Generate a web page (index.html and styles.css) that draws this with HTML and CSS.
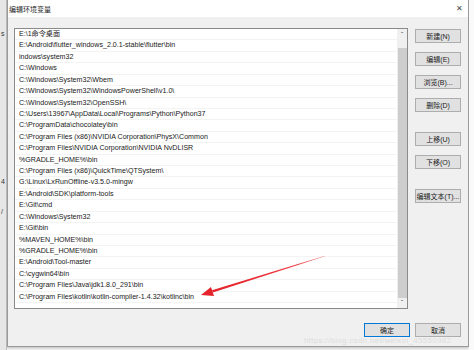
FILE: index.html
```html
<!DOCTYPE html>
<html lang="zh-CN">
<head>
    <meta charset="UTF-8">
    <title>编辑环境变量</title>
    <link rel="stylesheet" href="styles.css">
</head>
<body>
    <div class="desk">
        <div class="behind"><span class="mark m1">s</span><span class="mark m2">4</span><span class="mark m3">/</span></div>
        <div class="dialog">
            <div class="titlebar">
                <span class="title">编辑环境变量</span>
                <span class="close">✕</span>
            </div>
            <div class="main">
                <div class="list">
                    <ul class="rows">
                        <li>E:\1命令桌面</li>
                        <li>E:\Android\flutter_windows_2.0.1-stable\flutter\bin</li>
                        <li>indows\system32</li>
                        <li>C:\Windows</li>
                        <li>C:\Windows\System32\Wbem</li>
                        <li>C:\Windows\System32\WindowsPowerShell\v1.0\</li>
                        <li>C:\Windows\System32\OpenSSH\</li>
                        <li>C:\Users\13967\AppData\Local\Programs\Python\Python37</li>
                        <li>C:\ProgramData\chocolatey\bin</li>
                        <li>C:\Program Files (x86)\NVIDIA Corporation\PhysX\Common</li>
                        <li>C:\Program Files\NVIDIA Corporation\NVIDIA NvDLISR</li>
                        <li>%GRADLE_HOME%\bin</li>
                        <li>C:\Program Files (x86)\QuickTime\QTSystem\</li>
                        <li>G:\Linux\LxRunOffline-v3.5.0-mingw</li>
                        <li>E:\Android\SDK\platform-tools</li>
                        <li>E:\Git\cmd</li>
                        <li>C:\Windows\System32</li>
                        <li>E:\Git\bin</li>
                        <li>%MAVEN_HOME%\bin</li>
                        <li>%GRADLE_HOME%\bin</li>
                        <li>E:\Android\Tool-master</li>
                        <li>C:\cygwin64\bin</li>
                        <li>C:\Program Files\Java\jdk1.8.0_291\bin</li>
                        <li>C:\Program Files\kotlin\kotlin-compiler-1.4.32\kotlinc\bin</li>
                    </ul>
                    <div class="scrollbar">
                        <span class="arrow">&#710;</span>
                        <div class="thumb"></div>
                        <span class="arrow down">&#711;</span>
                    </div>
                </div>
                <div class="side">
                    <button class="btn">新建(N)</button>
                    <button class="btn">编辑(E)</button>
                    <button class="btn">浏览(B)...</button>
                    <button class="btn">删除(D)</button>
                    <button class="btn gap">上移(U)</button>
                    <button class="btn">下移(O)</button>
                    <button class="btn gap">编辑文本(T)...</button>
                </div>
            </div>
            <div class="footer">
                <button class="btn ok">确定</button>
                <button class="btn">取消</button>
            </div>
        </div>
        <div class="edge"></div>
    </div>

    <svg class="pointer" width="474" height="350" viewBox="0 0 474 350">
        <defs>
            <linearGradient id="fade" x1="212" y1="291" x2="325" y2="256" gradientUnits="userSpaceOnUse">
                <stop offset="0" stop-color="#e4232a"/>
                <stop offset="0.75" stop-color="#ee3b40"/>
                <stop offset="1" stop-color="#f6a0a4"/>
            </linearGradient>
        </defs>
        <polygon points="212.8,292.6 212,290.2 324.9,255.7 325.1,256.3" fill="url(#fade)"/>
        <polygon points="201,295 211,287 214,296" fill="#e4232a"/>
    </svg>
    <span class="watermark">https://blog.csdn.net/weixin_45550982</span>
</body>
</html>
```

FILE: styles.css
```css
*{
    margin: 0;
    padding: 0;
    box-sizing: border-box;
}

html,body{
    width: 474px;
    height: 350px;
    overflow: hidden;
}

body{
    background: #f7f7f7;
    font-family: "Liberation Sans", "Noto Sans CJK SC", sans-serif;
    font-size: 7px;
    color: #111;
}

.desk{
    display: flex;
    height: 350px;
}

/* window behind the dialog */
.behind{
    width: 7px;
    background: #e6e6e6;
    border-right: 1px solid #b9b9b9;
    position: relative;
}
.mark{
    position: absolute;
    left: 1px;
    font-size: 7px;
    color: #333;
}
.m1{ top: 30px; }
.m2{ top: 178px; }
.m3{ top: 208px; }

.dialog{
    width: 462px;
    height: 347px;
    background: #f0f0f0;
    border: 1px solid #9a9a9a;
    border-top: none;
    display: flex;
    flex-direction: column;
    box-shadow: 0 1px 3px rgba(0,0,0,0.25);
}

.edge{
    flex: 1;
    background: #fafafa;
}

.titlebar{
    height: 17px;
    background: #fff;
    display: flex;
    align-items: center;
    justify-content: space-between;
    padding: 0 5px 0 1px;
}
.title{
    font-size: 7px;
    color: #222;
}
.close{
    font-size: 8px;
    color: #444;
}

.main{
    display: flex;
    gap: 7px;
    padding: 11px 0 0 6px;
}

.list{
    width: 394px;
    height: 281px;
    background: #fff;
    border: 1px solid #8a8a8a;
    display: flex;
}

.rows{
    flex: 1;
    list-style: none;
}
.rows li{
    height: 11.43px;
    line-height: 11.43px;
    padding-left: 4px;
    border-bottom: 1px solid #f3f3f3;
    white-space: nowrap;
    font-size: 7.1px;
    color: #1a1a1a;
}

.scrollbar{
    width: 10px;
    background: #f0f0f0;
    display: flex;
    flex-direction: column;
    align-items: center;
}
.arrow{
    height: 12px;
    line-height: 12px;
    font-size: 8px;
    color: #606060;
}
.arrow.down{
    line-height: 8px;
    height: 9px;
}
.thumb{
    width: 9px;
    flex: 1;
    margin: 7px 0 1px;
    background: #cdcdcd;
}

.side{
    display: flex;
    flex-direction: column;
    gap: 9px;
    padding-top: 1px;
}

.btn{
    width: 46px;
    height: 14px;
    background: #e1e1e1;
    border: 1px solid #adadad;
    font-family: "Liberation Sans", "Noto Sans CJK SC", sans-serif;
    font-size: 7px;
    color: #222;
}
.side .gap{
    margin-top: 11px;
}

.footer{
    display: flex;
    justify-content: flex-end;
    gap: 5px;
    padding: 14px 7px 0 0;
}
.btn.ok{
    border: 1px solid #0078d7;
}

.pointer{
    position: absolute;
    left: 0;
    top: 0;
    pointer-events: none;
}

.watermark{
    position: absolute;
    left: 304px;
    top: 336px;
    font-size: 8px;
    color: rgba(215,215,215,0.8);
    letter-spacing: 0.3px;
}
```
